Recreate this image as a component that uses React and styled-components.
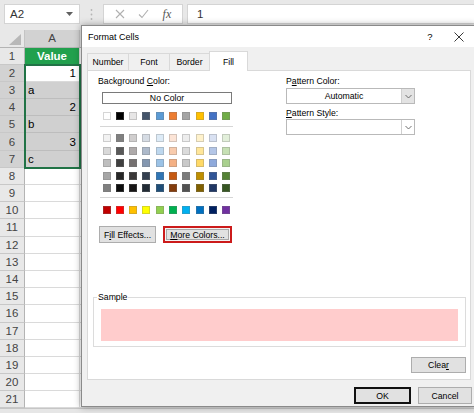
import styled, { createGlobalStyle } from 'styled-components';

const GlobalStyle = createGlobalStyle`
    html, body {
        margin: 0;
        padding: 0;
        background: #ffffff;
    }
    * {
        box-sizing: border-box;
    }
`;

const themeColors = ['#FFFFFF', '#000000', '#E7E6E6', '#44546A', '#5B9BD5', '#ED7D31', '#A5A5A5', '#FFC000', '#4472C4', '#70AD47'];

const tintColors = [
    ['#F2F2F2', '#808080', '#D0CECE', '#D6DCE4', '#DDEBF7', '#FCE4D6', '#EDEDED', '#FFF2CC', '#D9E1F2', '#E2EFDA'],
    ['#D9D9D9', '#595959', '#AEAAAA', '#ADB9CA', '#BDD7EE', '#F8CBAD', '#DBDBDB', '#FFE699', '#B4C6E7', '#C6E0B4'],
    ['#BFBFBF', '#404040', '#757171', '#8497B0', '#9BC2E6', '#F4B084', '#C9C9C9', '#FFD966', '#8EA9DB', '#A9D08E'],
    ['#A6A6A6', '#262626', '#3A3838', '#333F4F', '#2F75B5', '#C65911', '#7B7B7B', '#BF8F00', '#305496', '#548235'],
    ['#808080', '#0D0D0D', '#171616', '#222B35', '#1F4E78', '#833C0C', '#525252', '#806000', '#203764', '#375623'],
];

const standardColors = ['#C00000', '#FF0000', '#FFC000', '#FFFF00', '#92D050', '#00B050', '#00B0F0', '#0070C0', '#002060', '#7030A0'];

// column A contents for rows 1..7, the rest are empty
const cells = [
    { text: 'Value', kind: 'header' },
    { text: '1', kind: 'number' },
    { text: 'a', kind: 'text' },
    { text: '2', kind: 'number' },
    { text: 'b', kind: 'text' },
    { text: '3', kind: 'number' },
    { text: 'c', kind: 'text' },
];

const ROW_H = 17.2;
const HEAD_H = 17.5;

const ChevronDown = () => (
    <svg width="7" height="5" viewBox="0 0 7 5">
        <polyline points="0.5,1 3.5,4 6.5,1" fill="none" stroke="#606060" strokeWidth="0.9" />
    </svg>
);

const App = () => {
    const rows = Array.from({ length: 21 }, (_, i) => i + 1);

    return (
        <>
            <GlobalStyle />
            <Window>
                <FormulaBar>
                    <NameBox>
                        A2
                        <svg width="7" height="4" viewBox="0 0 7 4">
                            <polygon points="0,0 7,0 3.5,4" fill="#606060" />
                        </svg>
                    </NameBox>
                    <Grip>
                        <svg width="3" height="13" viewBox="0 0 3 13">
                            <circle cx="1.5" cy="2" r="0.9" fill="#b5b5b5" />
                            <circle cx="1.5" cy="6.5" r="0.9" fill="#b5b5b5" />
                            <circle cx="1.5" cy="11" r="0.9" fill="#b5b5b5" />
                        </svg>
                    </Grip>
                    <FormulaTools>
                        <svg width="10" height="10" viewBox="0 0 10 10">
                            <path d="M1 1 L9 9 M9 1 L1 9" stroke="#b0b0b0" strokeWidth="1.1" />
                        </svg>
                        <svg width="11" height="10" viewBox="0 0 11 10">
                            <path d="M1 5.5 L4 8.5 L10 1" fill="none" stroke="#b0b0b0" strokeWidth="1.1" />
                        </svg>
                        <Fx>fx</Fx>
                    </FormulaTools>
                    <FormulaInput>1</FormulaInput>
                </FormulaBar>

                <Sheet>
                    <SheetRow $height={HEAD_H}>
                        <Corner>
                            <svg width="12" height="11" viewBox="0 0 12 11">
                                <polygon points="12,0 12,11 0,11" fill="#b8b8b8" />
                            </svg>
                        </Corner>
                        <ColHeader $selected>A</ColHeader>
                        <ColHeader />
                    </SheetRow>
                    {rows.map((r) => {
                        const cell = cells[r - 1];
                        return (
                            <SheetRow key={r} $height={ROW_H}>
                                <RowHeader $selected={r >= 2 && r <= 7}>{r}</RowHeader>
                                <Cell $kind={cell ? cell.kind : 'empty'} $shaded={r >= 3 && r <= 7}>
                                    {cell ? cell.text : ''}
                                </Cell>
                                <Cell $kind="empty" />
                            </SheetRow>
                        );
                    })}
                    <SheetTabs />
                    <Selection style={{ top: HEAD_H + ROW_H - 1, height: ROW_H * 6 + 2 }} />
                </Sheet>

                <Dialog>
                    <TitleBar>
                        <Title>Format Cells</Title>
                        <HelpMark>?</HelpMark>
                        <CloseMark>
                            <svg width="10" height="10" viewBox="0 0 10 10">
                                <path d="M0.5 0.5 L9.5 9.5 M9.5 0.5 L0.5 9.5" stroke="#222" strokeWidth="0.9" />
                            </svg>
                        </CloseMark>
                    </TitleBar>

                    <DialogBody>
                        <Tabs>
                            <Tab $width={42}>Number</Tab>
                            <Tab $width={42}>Font</Tab>
                            <Tab $width={41}>Border</Tab>
                            <Tab $width={39} $active>Fill</Tab>
                        </Tabs>

                        <Panel>
                            <TopSection>
                                <LeftBlock>
                                    <Label>Background <u>C</u>olor:</Label>
                                    <NoColorButton>No Color</NoColorButton>
                                    <SwatchRow $top={8}>
                                        {themeColors.map((c) => (
                                            <Swatch key={c} $color={c} />
                                        ))}
                                    </SwatchRow>
                                    <Separator $top={6} />
                                    <TintGrid>
                                        {tintColors.flat().map((c, i) => (
                                            <Swatch key={i} $color={c} />
                                        ))}
                                    </TintGrid>
                                    <Separator $top={5} />
                                    <SwatchRow $top={8}>
                                        {standardColors.map((c) => (
                                            <Swatch key={c} $color={c} />
                                        ))}
                                    </SwatchRow>
                                    <ButtonRow>
                                        <PanelButton $width={57}>F<u>i</u>ll Effects...</PanelButton>
                                        <PanelButton $width={69} $focused><u>M</u>ore Colors...</PanelButton>
                                    </ButtonRow>
                                </LeftBlock>

                                <RightBlock>
                                    <Label>P<u>a</u>ttern Color:</Label>
                                    <Select $top={2}>
                                        <SelectValue>Automatic</SelectValue>
                                        <SelectArrow $filled>
                                            <ChevronDown />
                                        </SelectArrow>
                                    </Select>
                                    <Label $top={4}><u>P</u>attern Style:</Label>
                                    <Select $top={1}>
                                        <SelectValue />
                                        <SelectArrow>
                                            <ChevronDown />
                                        </SelectArrow>
                                    </Select>
                                </RightBlock>
                            </TopSection>

                            <SampleGroup>
                                <SampleLegend>Sample</SampleLegend>
                                <SampleFill />
                            </SampleGroup>

                            <ClearRow>
                                <PanelButton $width={55} $height={16}>Clea<u>r</u></PanelButton>
                            </ClearRow>
                        </Panel>

                        <Footer>
                            <DialogButton $width={57} $default>OK</DialogButton>
                            <DialogButton $width={54}>Cancel</DialogButton>
                        </Footer>
                    </DialogBody>
                </Dialog>
            </Window>
        </>
    );
};

const Window = styled.div`
    position: relative;
    width: 474px;
    height: 413px;
    overflow: hidden;
    background: #ffffff;
    font-family: 'Liberation Sans', Arial, sans-serif;
`;

/* ---------- formula bar ---------- */

const FormulaBar = styled.div`
    display: flex;
    align-items: center;
    height: 30px;
    padding: 4px 0 6px 4px;
    background: #e8e8e8;
`;

const NameBox = styled.div`
    display: flex;
    align-items: center;
    justify-content: space-between;
    width: 76px;
    height: 20px;
    padding: 0 6px 0 5px;
    background: #ffffff;
    border: 1px solid #d4d4d4;
    font-size: 11.5px;
    color: #333;
`;

const Grip = styled.div`
    display: flex;
    align-items: center;
    justify-content: center;
    width: 23px;
`;

const FormulaTools = styled.div`
    display: flex;
    align-items: center;
    justify-content: space-around;
    width: 80px;
    height: 20px;
    padding: 0 4px;
    background: #ffffff;
    border: 1px solid #d4d4d4;
`;

const Fx = styled.span`
    font-family: 'Liberation Serif', 'Times New Roman', serif;
    font-style: italic;
    font-size: 12px;
    color: #555;
`;

const FormulaInput = styled.div`
    flex: 1;
    height: 20px;
    margin-left: 4px;
    padding-left: 9px;
    display: flex;
    align-items: center;
    background: #ffffff;
    border: 1px solid #d4d4d4;
    border-right: none;
    font-size: 11.5px;
    color: #333;
`;

/* ---------- sheet ---------- */

const Sheet = styled.div`
    position: relative;
`;

const SheetRow = styled.div`
    display: grid;
    grid-template-columns: 25px 55px 1fr;
    height: ${(p) => p.$height}px;
`;

const Corner = styled.div`
    display: flex;
    align-items: flex-end;
    justify-content: flex-end;
    padding: 0 3px 2px 0;
    background: #e8e8e8;
    border-right: 1px solid #c4c4c4;
    border-bottom: 1px solid #b4b4b4;
`;

const ColHeader = styled.div`
    display: flex;
    align-items: center;
    justify-content: center;
    background: ${(p) => (p.$selected ? '#d2d2d2' : '#e8e8e8')};
    border-right: 1px solid #c4c4c4;
    border-bottom: 1px solid #b4b4b4;
    font-size: 11.5px;
    color: #444;
`;

const RowHeader = styled.div`
    display: flex;
    align-items: center;
    justify-content: center;
    background: ${(p) => (p.$selected ? '#d2d2d2' : '#e8e8e8')};
    border-right: 1px solid #b4b4b4;
    border-bottom: 1px solid #c8c8c8;
    font-size: 11.5px;
    color: #444;
`;

const Cell = styled.div`
    display: flex;
    align-items: center;
    padding: 0 3px;
    overflow: hidden;
    font-size: 11.5px;
    color: #000;
    border-right: 1px solid #dadada;
    border-bottom: 1px solid ${(p) => (p.$shaded ? '#bdbdbd' : '#dadada')};
    background: ${(p) => (p.$kind === 'header' ? '#21a04d' : p.$shaded ? '#d0d0d0' : '#ffffff')};
    justify-content: ${(p) => (p.$kind === 'number' ? 'flex-end' : p.$kind === 'header' ? 'center' : 'flex-start')};
    ${(p) => p.$kind === 'header' && 'color: #ffffff; font-weight: bold;'}
`;

const SheetTabs = styled.div`
    height: 20px;
    background: #e6e6e6;
    border-top: 1px solid #c6c6c6;
`;

const Selection = styled.div`
    position: absolute;
    left: 24px;
    width: 57px;
    border: 2px solid #217346;
    pointer-events: none;
`;

/* ---------- dialog ---------- */

const Dialog = styled.div`
    position: absolute;
    left: 81px;
    top: 25px;
    width: 395px;
    height: 382px;
    display: flex;
    flex-direction: column;
    background: #f0f0f0;
    border: 1px solid #8a8a8a;
    box-shadow: 0 0 7px rgba(0, 0, 0, 0.35);
    font-family: 'Liberation Sans', Arial, sans-serif;
    font-size: 8.7px;
    color: #000;
`;

const TitleBar = styled.div`
    display: flex;
    align-items: center;
    height: 21px;
    padding-left: 6px;
    background: #ffffff;
`;

const Title = styled.span`
    flex: 1;
    font-size: 9px;
`;

const HelpMark = styled.span`
    width: 12px;
    margin-right: 18px;
    font-size: 9.5px;
    text-align: center;
`;

const CloseMark = styled.span`
    display: flex;
    margin-right: 11px;
`;

const DialogBody = styled.div`
    flex: 1;
    display: flex;
    flex-direction: column;
    padding: 4px 4px 0 5px;
`;

const Tabs = styled.div`
    display: flex;
    align-items: flex-start;
    height: 20px;
`;

const Tab = styled.div`
    display: flex;
    align-items: center;
    justify-content: center;
    width: ${(p) => p.$width}px;
    margin-left: -1px;
    border: 1px solid #d9d9d9;
    border-bottom: none;
    ${(p) =>
        p.$active
            ? 'height: 20px; background: #ffffff; position: relative; z-index: 1;'
            : 'height: 17px; margin-top: 2px; background: #f0f0f0;'}

    &:first-child {
        margin-left: 0;
    }
`;

const Panel = styled.div`
    display: flex;
    flex-direction: column;
    height: 310px;
    margin-top: -1px;
    padding: 5px 4px 6px 5px;
    background: #ffffff;
    border: 1px solid #d9d9d9;
`;

const TopSection = styled.div`
    display: flex;
    padding-left: 5px;
`;

const LeftBlock = styled.div`
    display: flex;
    flex-direction: column;
    width: 188px;
`;

const RightBlock = styled.div`
    display: flex;
    flex-direction: column;
    width: 129px;
`;

const Label = styled.div`
    height: 10px;
    line-height: 10px;
    margin-top: ${(p) => p.$top || 0}px;
    white-space: nowrap;
`;

const NoColorButton = styled.div`
    display: flex;
    align-items: center;
    justify-content: center;
    width: 130px;
    height: 12px;
    margin: 6px 0 0 4px;
    background: #ffffff;
    border: 1px solid #7a7a7a;
`;

const SwatchRow = styled.div`
    display: grid;
    grid-template-columns: repeat(10, 8px);
    column-gap: 5.33px;
    margin: ${(p) => p.$top}px 0 0 4.5px;
`;

const TintGrid = styled(SwatchRow).attrs({ $top: 7 })`
    row-gap: 4.6px;
`;

const Swatch = styled.div`
    width: 8px;
    height: 8px;
    background: ${(p) => p.$color};
    border: 1px solid rgba(120, 120, 120, 0.3);
`;

const Separator = styled.div`
    width: 133px;
    height: 1px;
    margin: ${(p) => p.$top}px 0 0 2px;
    background: #d6d6d6;
`;

const ButtonRow = styled.div`
    display: flex;
    gap: 7px;
    margin: 12px 0 0 1px;
`;

const PanelButton = styled.div`
    display: flex;
    align-items: center;
    justify-content: center;
    width: ${(p) => p.$width}px;
    height: ${(p) => p.$height || 17}px;
    background: #e1e1e1;
    border: ${(p) => (p.$focused ? '2px solid #cc1b1b' : '1px solid #adadad')};
    ${(p) => p.$focused && 'box-shadow: inset 0 0 0 1px #f4f4f4, inset 0 0 0 2px #a8a8a8;'}
    white-space: nowrap;
`;

const Select = styled.div`
    display: flex;
    height: 16px;
    margin-top: ${(p) => p.$top}px;
    background: #ffffff;
    border: 1px solid #b9b9b9;
`;

const SelectValue = styled.div`
    flex: 1;
    display: flex;
    align-items: center;
    justify-content: center;
`;

const SelectArrow = styled.div`
    display: flex;
    align-items: center;
    justify-content: center;
    width: 13px;
    background: ${(p) => (p.$filled ? '#e3e3e3' : '#ffffff')};
    border-left: 1px solid #cfcfcf;
`;

const SampleGroup = styled.fieldset`
    margin: auto 0 0 0;
    padding: 0 7px 5px;
    border: 1px solid #dcdcdc;
    min-width: 0;
`;

const SampleLegend = styled.legend`
    margin-left: -4px;
    padding: 0 1px;
    height: 11px;
    line-height: 11px;
`;

const SampleFill = styled.div`
    height: 32px;
    margin-top: 6.5px;
    background: #ffcccc;
`;

const ClearRow = styled.div`
    display: flex;
    justify-content: flex-end;
    margin-top: 10px;
`;

const Footer = styled.div`
    display: flex;
    justify-content: flex-end;
    gap: 7px;
    padding: 7px 0 0;
    margin-right: -1px;
`;

const DialogButton = styled.div`
    display: flex;
    align-items: center;
    justify-content: center;
    width: ${(p) => p.$width}px;
    height: 17px;
    background: #e1e1e1;
    border: ${(p) => (p.$default ? '2px solid #111111' : '1px solid #adadad')};
`;

export default App;
